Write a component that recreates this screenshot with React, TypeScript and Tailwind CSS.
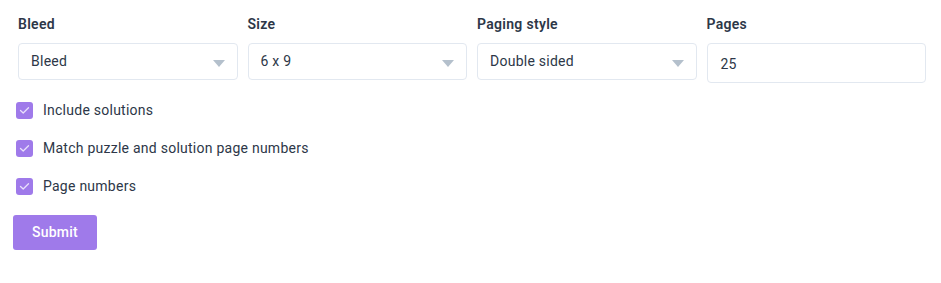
import React from 'react';

const font = { fontFamily: 'Roboto, "Noto Sans", sans-serif' };

function Arrow() {
    return (
        <svg width="12" height="7" viewBox="0 0 12 7" className="absolute right-[12px] top-[16px]">
            <path d="M0 0 L12 0 L6 7 Z" fill="#b4c0cc" />
        </svg>
    );
}

function SelectField({ label, value }: { label: string; value: string }) {
    return (
        <div className="flex flex-col">
            <div className="h-[25px] pt-[16px] box-content text-[14px] font-semibold leading-[17px] tracking-[0.3px] text-[#2d3748]">{label}</div>
            <div className="relative mt-[2px] flex h-[37px] items-center rounded-[4px] border border-[#e2e8f0] bg-white px-[12px] text-[14px] tracking-[0.25px] text-[#2d3748]">
                {value}
                <Arrow />
            </div>
        </div>
    );
}

function CheckRow({ label }: { label: string }) {
    return (
        <label className="flex h-[38px] items-center gap-[10px] text-[14px] tracking-[0.25px] text-[#2d3748]">
            <span className="flex h-[17px] w-[17px] items-center justify-center rounded-[3px] bg-[#9f7aea]">
                <svg width="11" height="9" viewBox="0 0 11 9">
                    <path d="M1.5 4.5 L4.2 7 L9.5 1.8" fill="none" stroke="#e9e0fb" strokeWidth="1.3" strokeLinecap="round" strokeLinejoin="round" />
                </svg>
            </span>
            {label}
        </label>
    );
}

export default function App() {
    return (
        <div className="min-h-[283px] w-full bg-white" style={font}>
            <div className="pl-[18px] pr-[15px]">
                <div className="grid grid-cols-4 gap-[10px]">
                    <SelectField label="Bleed" value="Bleed" />
                    <SelectField label="Size" value="6 x 9" />
                    <SelectField label="Paging style" value="Double sided" />
                    <div className="flex flex-col">
                        <div className="h-[25px] pt-[16px] box-content text-[14px] font-semibold leading-[17px] tracking-[0.3px] text-[#2d3748]">Pages</div>
                        <div className="mt-[2px] flex h-[40px] items-center rounded-[4px] border border-[#e2e8f0] bg-white px-[13px] pt-[2px] text-[14px] tracking-[0.25px] text-[#2d3748]">
                            25
                        </div>
                    </div>
                </div>
            </div>
            <div className="mt-[8px] flex flex-col pl-[16px]">
                <CheckRow label="Include solutions" />
                <CheckRow label="Match puzzle and solution page numbers" />
                <CheckRow label="Page numbers" />
            </div>
            <div className="pl-[13px] pt-[10px]">
                <button className="h-[35px] w-[84px] rounded-[3px] bg-[#9f7aea] text-[14px] font-medium tracking-[0.2px] text-white">Submit</button>
            </div>
        </div>
    );
}
